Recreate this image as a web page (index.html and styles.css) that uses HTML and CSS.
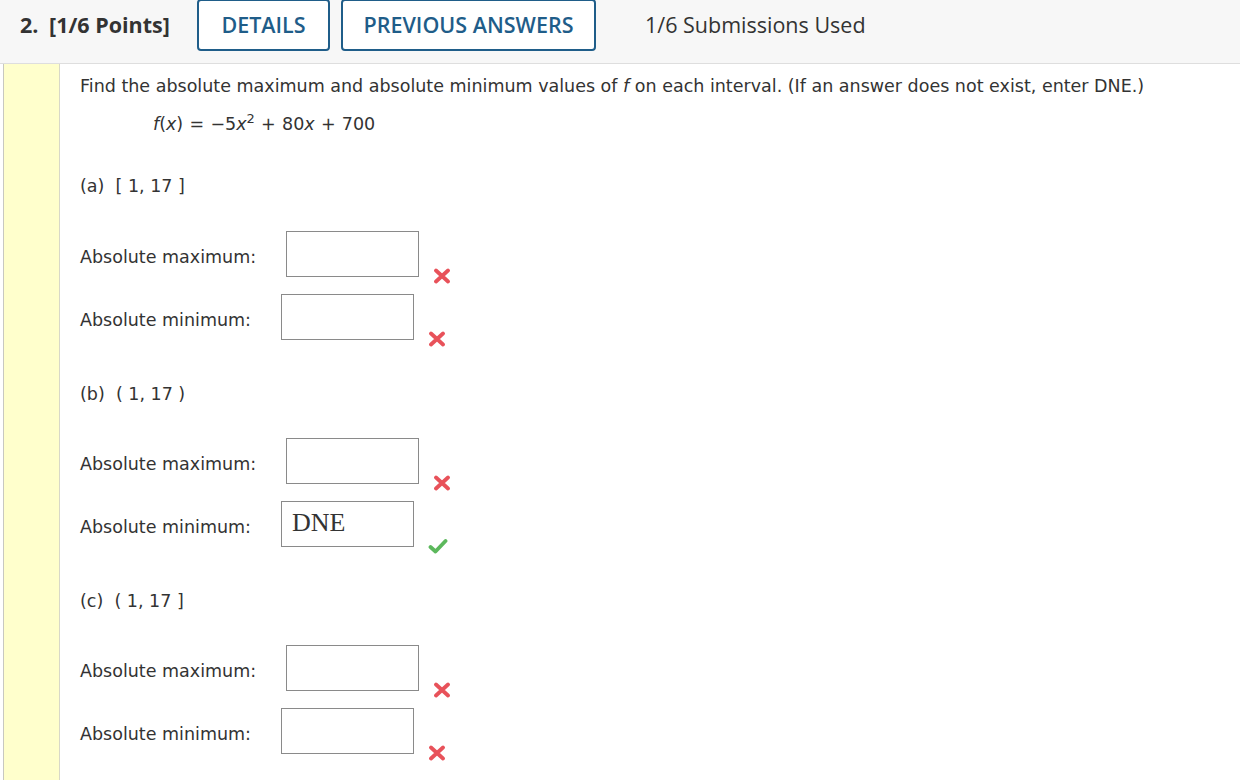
FILE: index.html
```html
<!DOCTYPE html>
<html>
<head>
<meta charset="utf-8">
<link rel="stylesheet" href="styles.css">
</head>
<body>
<div class="header">
  <div class="qtitle">2. <span class="pts">[1/6 Points]</span></div>
  <div class="btn btn-details">DETAILS</div>
  <div class="btn btn-prev">PREVIOUS ANSWERS</div>
  <div class="subs">1/6 Submissions Used</div>
</div>
<div class="main">
  <div class="sidebar"></div>
  <div class="content">
    <div class="prompt">Find the absolute maximum and absolute minimum values of <i>f</i> on each interval. (If an answer does not exist, enter DNE.)</div>
    <div class="formula"><i>f</i>(<i>x</i>) = −5<i>x</i><sup>2</sup> + 80<i>x</i> + 700</div>

    <div class="part">(a) &nbsp;[ 1, 17 ]</div>
    <div class="row first">
      <span class="lbl">Absolute maximum:</span>
      <span class="box"></span>
      <svg class="mark" viewBox="0 0 18 16" width="18" height="16"><path d="M3 2.5 L15 13.5 M15 2.5 L3 13.5" stroke="#e8525a" stroke-width="3.8" stroke-linecap="round"/></svg>
    </div>
    <div class="row">
      <span class="lbl">Absolute minimum:</span>
      <span class="box"></span>
      <svg class="mark" viewBox="0 0 18 16" width="18" height="16"><path d="M3 2.5 L15 13.5 M15 2.5 L3 13.5" stroke="#e8525a" stroke-width="3.8" stroke-linecap="round"/></svg>
    </div>

    <div class="part later">(b) &nbsp;( 1, 17 )</div>
    <div class="row first later">
      <span class="lbl">Absolute maximum:</span>
      <span class="box"></span>
      <svg class="mark" viewBox="0 0 18 16" width="18" height="16"><path d="M3 2.5 L15 13.5 M15 2.5 L3 13.5" stroke="#e8525a" stroke-width="3.8" stroke-linecap="round"/></svg>
    </div>
    <div class="row">
      <span class="lbl">Absolute minimum:</span>
      <span class="box filled">DNE</span>
      <svg class="mark" viewBox="0 0 20 16" width="20" height="16"><path d="M2.5 9 L7.5 13.5 L17.5 3" fill="none" stroke="#5cb85c" stroke-width="3.8" stroke-linecap="round" stroke-linejoin="round"/></svg>
    </div>

    <div class="part later">(c) &nbsp;( 1, 17 ]</div>
    <div class="row first later">
      <span class="lbl">Absolute maximum:</span>
      <span class="box"></span>
      <svg class="mark" viewBox="0 0 18 16" width="18" height="16"><path d="M3 2.5 L15 13.5 M15 2.5 L3 13.5" stroke="#e8525a" stroke-width="3.8" stroke-linecap="round"/></svg>
    </div>
    <div class="row">
      <span class="lbl">Absolute minimum:</span>
      <span class="box"></span>
      <svg class="mark" viewBox="0 0 18 16" width="18" height="16"><path d="M3 2.5 L15 13.5 M15 2.5 L3 13.5" stroke="#e8525a" stroke-width="3.8" stroke-linecap="round"/></svg>
    </div>
  </div>
</div>
</body>
</html>
```
FILE: styles.css
```css
html, body {
  margin: 0;
  padding: 0;
  background: #ffffff;
}
body {
  font-family: "DejaVu Sans", Verdana, sans-serif;
  color: #333333;
  height: 780px;
  overflow: hidden;
}
.header {
  height: 64px;
  box-sizing: border-box;
  background: #f7f7f7;
  border-bottom: 1px solid #dedede;
  display: flex;
  align-items: flex-start;
  font-family: "Open Sans", sans-serif;
}
.qtitle {
  font-weight: 700;
  font-size: 21.5px;
  color: #333;
  margin-left: 20px;
  margin-top: 10px;
  line-height: 30px;
  width: 177px;
  white-space: nowrap;
}
.pts {
  margin-left: 5px;
}
.btn {
  box-sizing: border-box;
  height: 52px;
  border: 2px solid #1f5d89;
  border-radius: 4px;
  color: #1f5d89;
  font-size: 21.5px;
  font-weight: 600;
  display: flex;
  align-items: center;
  justify-content: center;
  margin-top: -1px;
  padding-bottom: 2px;
  background: #ffffff;
}
.btn-details {
  width: 133px;
}
.btn-prev {
  width: 255px;
  margin-left: 11px;
}
.subs {
  font-size: 21.5px;
  color: #333;
  margin-left: 49px;
  margin-top: 10px;
  line-height: 30px;
}
.main {
  display: flex;
  height: 716px;
}
.sidebar {
  width: 55px;
  margin-left: 3px;
  background: #ffffcc;
  border-left: 1px solid #c8c8c0;
  border-right: 1px solid #d8d8c8;
  flex: none;
}
.content {
  padding-left: 20px;
  font-size: 17.5px;
}
.prompt {
  margin-top: 12px;
  line-height: 20px;
  white-space: nowrap;
}
.formula {
  margin-top: 18px;
  line-height: 20px;
  padding-left: 73px;
  word-spacing: 0.7px;
}
.formula sup {
  font-size: 13px;
  line-height: 0;
  vertical-align: 7px;
}
.part {
  margin-top: 42px;
  line-height: 20px;
  white-space: pre;
}
.part.later {
  margin-top: 44px;
}
.row {
  display: flex;
  align-items: flex-start;
  margin-top: 17px;
}
.row.first {
  margin-top: 35px;
}
.row.first.later {
  margin-top: 34px;
}
.lbl {
  line-height: 20px;
  margin-top: 16px;
  margin-right: 30px;
  white-space: nowrap;
}
.box {
  box-sizing: border-box;
  width: 133px;
  height: 46px;
  border: 1px solid #8a8a8a;
  background: #fff;
  font-family: "Liberation Serif", "Times New Roman", serif;
  font-size: 26px;
  line-height: 44px;
  padding-left: 10px;
  color: #333;
}
.box.filled {
  line-height: 42px;
}
.mark {
  margin-left: 14px;
  margin-top: 37px;
  margin-bottom: -16px;
  flex: none;
}
```
